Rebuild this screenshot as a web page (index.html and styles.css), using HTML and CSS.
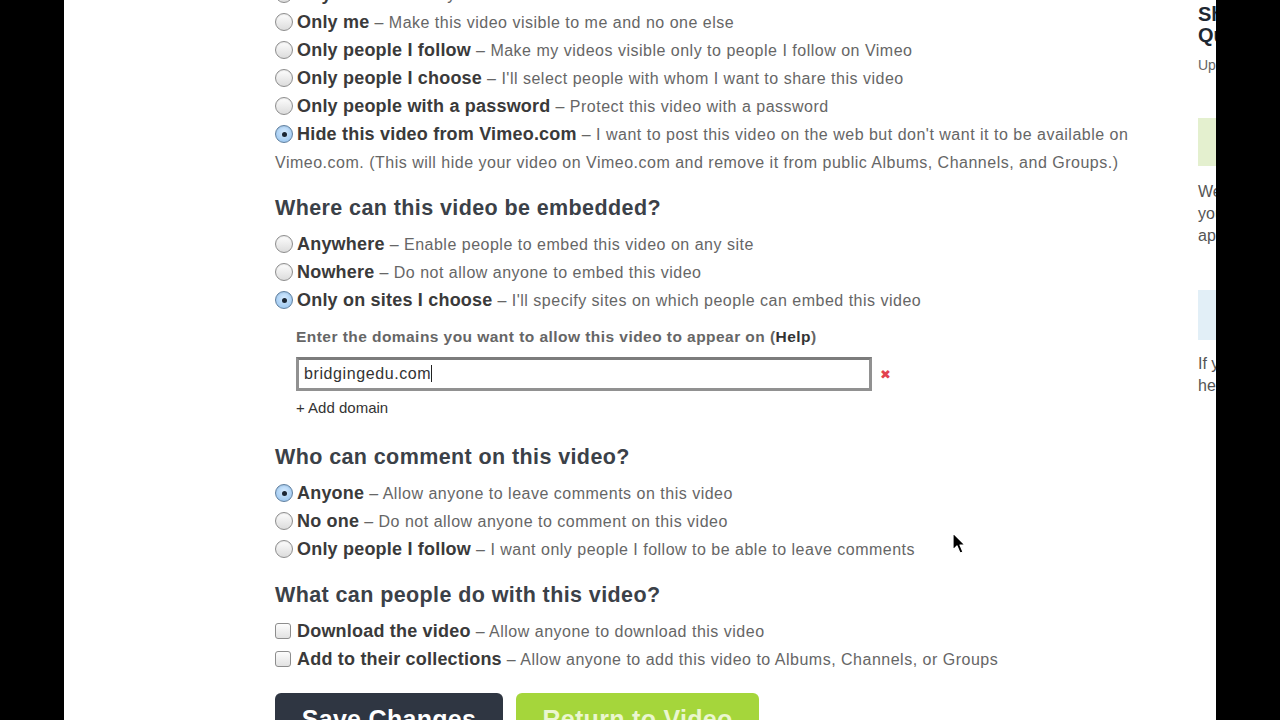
FILE: index.html
```html
<!DOCTYPE html>
<html>
<head>
<meta charset="utf-8">
<link rel="stylesheet" href="styles.css">
</head>
<body>
<div class="screen">
  <main class="main">
    <div class="opt"><span class="radio"></span><b>Anyone</b> <span class="desc">– Allow anyone to see this video</span></div>
    <div class="opt"><span class="radio"></span><b>Only me</b> <span class="desc">– Make this video visible to me and no one else</span></div>
    <div class="opt"><span class="radio"></span><b>Only people I follow</b> <span class="desc">– Make my videos visible only to people I follow on Vimeo</span></div>
    <div class="opt"><span class="radio"></span><b>Only people I choose</b> <span class="desc">– I'll select people with whom I want to share this video</span></div>
    <div class="opt"><span class="radio"></span><b>Only people with a password</b> <span class="desc">– Protect this video with a password</span></div>
    <div class="opt"><span class="radio on"></span><b>Hide this video from Vimeo.com</b> <span class="desc">– I want to post this video on the web but don't want it to be available on Vimeo.com. (This will hide your video on Vimeo.com and remove it from public Albums, Channels, and Groups.)</span></div>

    <h2>Where can this video be embedded?</h2>
    <div class="opt"><span class="radio"></span><b>Anywhere</b> <span class="desc">– Enable people to embed this video on any site</span></div>
    <div class="opt"><span class="radio"></span><b>Nowhere</b> <span class="desc">– Do not allow anyone to embed this video</span></div>
    <div class="opt"><span class="radio on"></span><b>Only on sites I choose</b> <span class="desc">– I'll specify sites on which people can embed this video</span></div>

    <div class="domains">
      <div class="dlabel">Enter the domains you want to allow this video to appear on (<span class="help">Help</span>)</div>
      <div class="drow">
        <div class="dinput">bridgingedu.com<span class="caret"></span></div>
        <span class="remove">✖</span>
      </div>
      <div class="add">+ Add domain</div>
    </div>

    <h2>Who can comment on this video?</h2>
    <div class="opt"><span class="radio on"></span><b>Anyone</b> <span class="desc">– Allow anyone to leave comments on this video</span></div>
    <div class="opt"><span class="radio"></span><b>No one</b> <span class="desc">– Do not allow anyone to comment on this video</span></div>
    <div class="opt"><span class="radio"></span><b>Only people I follow</b> <span class="desc">– I want only people I follow to be able to leave comments</span></div>

    <h2>What can people do with this video?</h2>
    <div class="opt"><span class="check"></span><b>Download the video</b> <span class="desc">– Allow anyone to download this video</span></div>
    <div class="opt"><span class="check"></span><b>Add to their collections</b> <span class="desc">– Allow anyone to add this video to Albums, Channels, or Groups</span></div>

    <div class="buttons">
      <span class="btn save">Save Changes</span>
      <span class="btn ret">Return to Video</span>
    </div>
  </main>
  <aside class="side">
    <h3>Sharing Quick</h3>
    <p class="up">Upload settings</p>
    <div class="box green"></div>
    <p class="sp">We recommend that<br>you choose the right<br>approach for sharing</p>
    <div class="box blue"></div>
    <p class="sp">If you need more<br>help, visit our guide</p>
  </aside>
  <svg class="cursor" width="16" height="24" viewBox="0 0 16 24"><path d="M1 1 L1 18 L5 14 L8 21 L11 20 L8 13 L13 13 Z" fill="#000" stroke="#fff" stroke-width="1.2" stroke-linejoin="round"/></svg>
</div>
</body>
</html>
```
FILE: styles.css
```css
html, body { margin: 0; padding: 0; background: #000; }
body { font-family: "Liberation Sans", Arial, Helvetica, sans-serif; }
.screen {
  position: relative;
  width: 1152px;
  height: 720px;
  margin-left: 64px;
  background: #fff;
  overflow: hidden;
  display: flex;
  align-items: flex-start;
  padding-left: 211px;
  box-sizing: border-box;
}
.main { width: 870px; flex: none; margin-top: -20px; }
.opt {
  line-height: 28px;
  font-size: 18px;
  color: #333;
}
.opt b { font-weight: bold; color: #3a3a3a; letter-spacing: 0.2px; line-height: 1; }
.desc { font-size: 16px; color: #666; letter-spacing: 0.5px; line-height: 1; }
.radio {
  display: inline-block;
  width: 16px;
  height: 16px;
  border: 1px solid #8d8d8d;
  border-radius: 50%;
  background: linear-gradient(#fdfdfd, #dcdcdc);
  vertical-align: -3px;
  margin-right: 4px;
  position: relative;
  box-shadow: inset 0 1px 1px rgba(0,0,0,0.08);
}
.radio.on {
  background: radial-gradient(circle at 50% 40%, #d6ebff, #8fbfec);
  border-color: #5f7f9f;
}
.radio.on::after {
  content: "";
  position: absolute;
  left: 5.5px;
  top: 5.5px;
  width: 5px;
  height: 5px;
  border-radius: 50%;
  background: #1b2633;
}
.check {
  display: inline-block;
  width: 14px;
  height: 14px;
  border: 1px solid #8d8d8d;
  border-radius: 3px;
  background: linear-gradient(#fdfdfd, #e2e2e2);
  vertical-align: -2px;
  margin-right: 6px;
}
h2 {
  margin: 18px 0 8px;
  font-size: 21.5px;
  letter-spacing: 0.4px;
  line-height: 28px;
  color: #3b4148;
  font-weight: bold;
}
.domains { padding-left: 21px; margin-top: 12px; margin-bottom: 25px; }
.domains + h2 { margin-top: 0; }
.dlabel { font-size: 15.5px; letter-spacing: 0.45px; font-weight: bold; color: #666; line-height: 22px; margin-top: 1px; }
.help { color: #333; }
.drow { display: flex; align-items: center; margin-top: 9px; }
.dinput {
  height: 28px;
  border: 3px solid #919191;
  border-top-color: #7c7c7c;
  font-size: 16px;
  letter-spacing: 0.6px;
  line-height: 28px;
  color: #333;
  padding-left: 5px;
  box-sizing: content-box;
  width: 565px;
}
.caret { display: inline-block; width: 1px; height: 17px; background: #222; vertical-align: -3px; }
.remove { color: #e2434f; font-size: 13px; margin-left: 8px; }
.add { font-size: 15px; color: #333; line-height: 20px; margin-top: 7px; }
.buttons { display: flex; gap: 13px; margin-top: 20px; }
.btn {
  display: block;
  height: 50px;
  border-radius: 6px;
  font-size: 25px;
  letter-spacing: 0.3px;
  font-weight: bold;
  text-align: center;
  padding-top: 12px;
  box-sizing: border-box;
  line-height: 28px;
}
.save { width: 228px; background: #2f3642; color: #fff; }
.ret { width: 243px; background: #a5d63b; color: #eaf6cf; }
.side { width: 220px; flex: none; margin-left: 53px; padding-top: 4px; }
.side h3 {
  margin: 0;
  font-size: 20px;
  line-height: 21px;
  width: 90px;
  color: #1e2832;
  font-weight: bold;
}
.up { margin: 10px 0 0; font-size: 14px; color: #666; line-height: 18px; }
.box { height: 48px; }
.green { background: #e4f0cf; margin-top: 44px; }
.blue { background: #e2eff7; margin-top: 43px; height: 50px; }
.sp { margin: 15px 0 0; font-size: 16px; line-height: 22px; color: #555; white-space: nowrap; }
.blue + .sp { margin-top: 13px; }
.cursor { position: absolute; left: 888px; top: 532px; }
```
